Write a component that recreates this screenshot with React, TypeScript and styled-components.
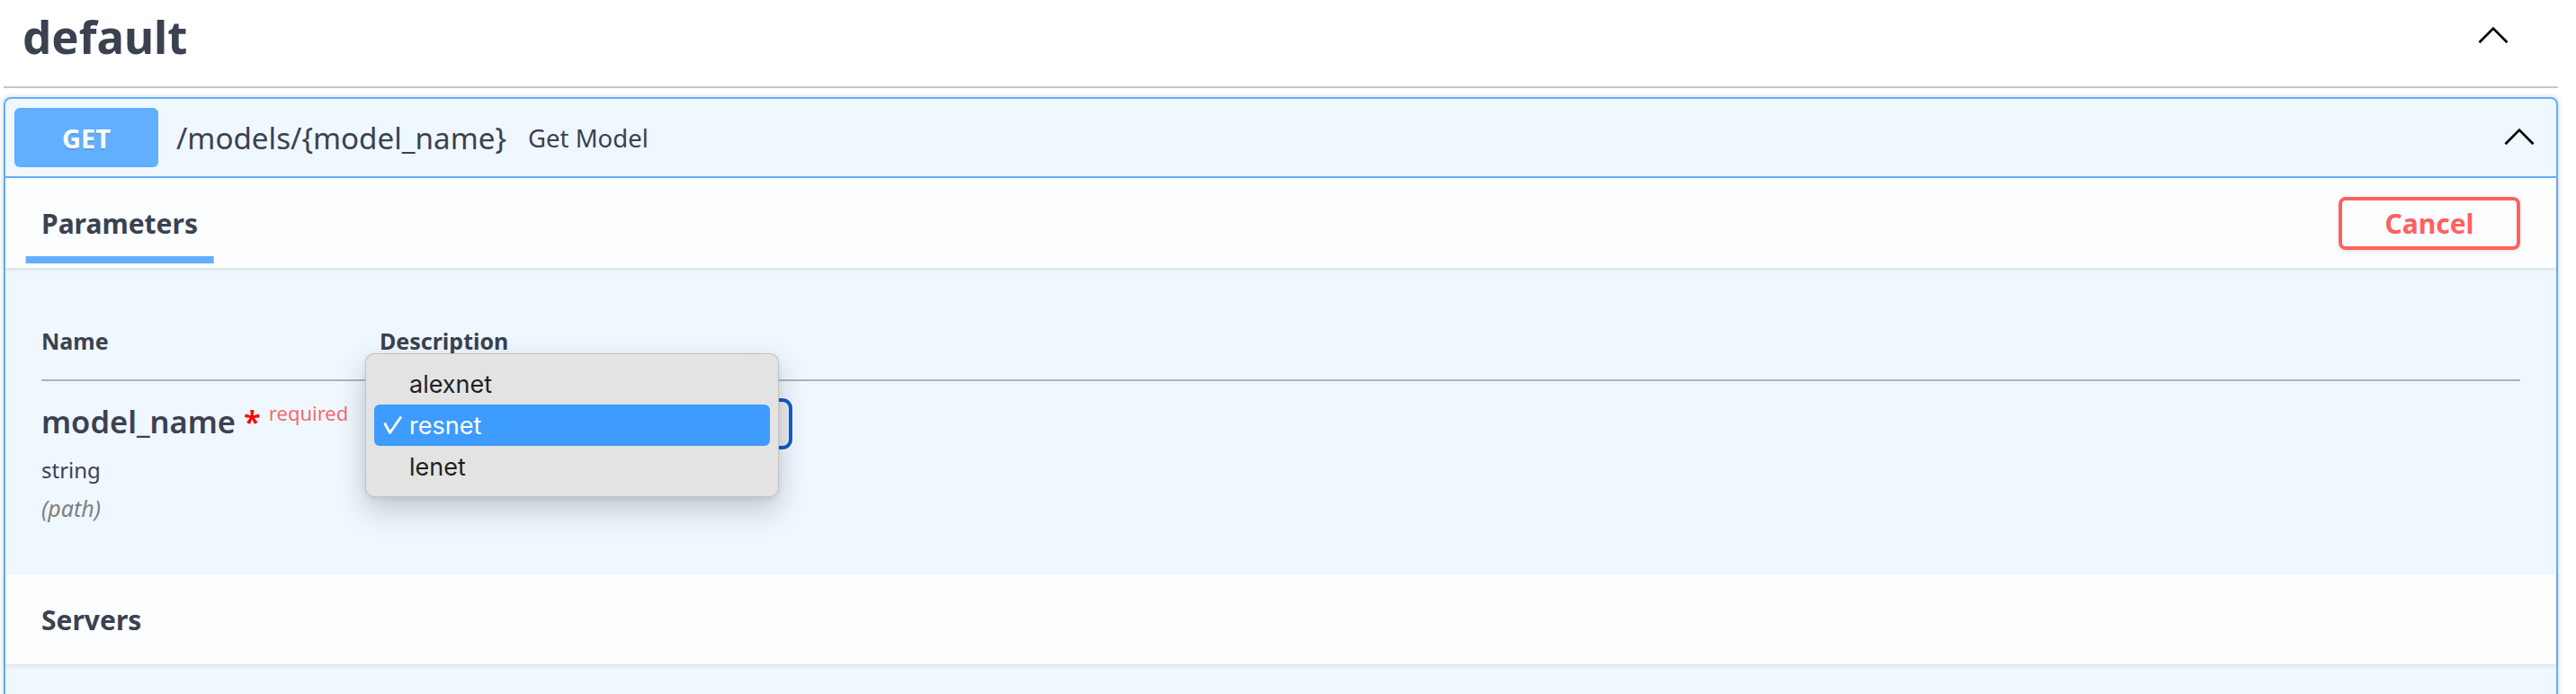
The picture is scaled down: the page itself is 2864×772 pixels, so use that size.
import React from "react";
import styled, { createGlobalStyle } from "styled-components";

const GlobalStyle = createGlobalStyle`
  html, body { margin: 0; padding: 0; background: #ffffff; }
  body {
    font-family: "Noto Sans", "Open Sans", sans-serif;
    color: #3b4151;
    -webkit-font-smoothing: antialiased;
  }
  * { box-sizing: border-box; }
`;

const Page = styled.div`
  padding: 0 20px 0 4px;
`;

const TagHeader = styled.div`
  display: flex;
  align-items: center;
  justify-content: space-between;
  height: 98px;
  padding: 12px 55px 28px 21px;
  border-bottom: 2px solid #c5c6cb;
  margin-bottom: 10px;
`;

const TagTitle = styled.h3`
  margin: 0;
  font-size: 51px;
  font-weight: 700;
  line-height: 56px;
  color: #3b4151;
`;

const ChevronSvg = styled.svg<{ $lift?: number }>`
  display: block;
  flex: none;
  margin-bottom: ${(p) => (p.$lift ?? 0) * 2}px;
`;

const Chevron = ({ lift }: { lift?: number }) => (
  <ChevronSvg $lift={lift} width="34" height="20" viewBox="0 0 34 20">
    <polyline
      points="1.5,18.3 17,2.6 32.5,18.3"
      fill="none"
      stroke="#000"
      strokeWidth="2.7"
    />
  </ChevronSvg>
);

const Opblock = styled.div`
  border: 2px solid #61affe;
  border-radius: 8px;
  background: #eff7ff;
  box-shadow: 0 0 6px rgba(0, 0, 0, 0.19);
`;

const Summary = styled.div`
  display: flex;
  align-items: center;
  padding: 10px 24px 10px 10px;
  border-bottom: 2px solid #61affe;
`;

const Method = styled.span`
  display: inline-flex;
  align-items: center;
  justify-content: center;
  min-width: 160px;
  height: 66px;
  border-radius: 6px;
  background: #61affe;
  color: #ffffff;
  font-size: 29px;
  font-weight: 700;
  text-shadow: 0 2px 0 rgba(0, 0, 0, 0.1);
`;

const PathText = styled.span`
  padding: 0 20px;
  font-size: 33.2px;
  color: #3b4151;
  white-space: nowrap;
`;

const SummaryDesc = styled.span`
  flex: 1;
  margin-left: 4px;
  font-size: 27.5px;
  color: #3b4151;
`;

const SectionHeader = styled.div`
  position: relative;
  display: flex;
  align-items: center;
  justify-content: space-between;
  height: 100px;
  padding: 0 40px;
  background: rgba(255, 255, 255, 0.8);
  box-shadow: 0 2px 4px rgba(0, 0, 0, 0.1);
`;

const SectionTitle = styled.h4<{ $active?: boolean }>`
  position: relative;
  margin: 0;
  font-size: 30px;
  font-weight: 700;
  line-height: 41px;
  color: #3b4151;
  &::after {
    content: "";
    display: ${(p) => (p.$active ? "block" : "none")};
    position: absolute;
    left: 50%;
    transform: translateX(-50%);
    width: 120%;
    height: 8px;
    top: calc(100% + 16px);
    background: #61affe;
  }
`;

const CancelButton = styled.button`
  width: 202px;
  height: 59px;
  padding: 0;
  border: 4px solid #ff6060;
  border-radius: 8px;
  background: transparent;
  color: #ff6060;
  font-family: inherit;
  font-size: 30px;
  font-weight: 700;
  box-shadow: 0 2px 4px rgba(0, 0, 0, 0.1);
`;

const ParamsBody = styled.div`
  padding: 40px;
`;

const HeadRow = styled.div`
  display: grid;
  grid-template-columns: 376px 1fr;
  border-bottom: 2px solid #aeb3bd;
`;

const HeadCell = styled.div`
  padding: 23px 0 25px;
  font-size: 25px;
  font-weight: 700;
  line-height: 36px;
  color: #3b4151;
`;

const ParamRow = styled.div`
  display: grid;
  grid-template-columns: 376px 1fr;
  height: 175px;
`;

const NameCell = styled.div`
  padding-top: 22px;
`;

const NameLine = styled.div`
  font-size: 34.5px;
  font-weight: 600;
  line-height: 46px;
  white-space: nowrap;
  color: #3b4151;
`;

const Star = styled.span`
  color: #ff0000;
`;

const Required = styled.span`
  position: relative;
  top: -14px;
  padding-left: 9px;
  font-size: 22px;
  font-weight: 400;
  color: rgba(255, 0, 0, 0.6);
`;

const TypeLine = styled.div`
  margin-top: 11px;
  font-size: 24px;
  line-height: 32px;
  color: #3b4151;
`;

const InLine = styled.div`
  margin-top: 10px;
  font-size: 25px;
  line-height: 32px;
  font-style: italic;
  color: #808080;
`;

const DescCell = styled.div`
  padding-top: 19px;
`;

const SelectBox = styled.div`
  position: relative;
  width: 459px;
  height: 57px;
  border: 4px solid #0b5fd1;
  border-radius: 11px;
  background: #ececef;
  box-shadow: 0 0 0 1.5px #ffffff;
`;

const Menu = styled.div`
  position: absolute;
  left: -20px;
  top: -54px;
  z-index: 10;
  width: 460px;
  height: 160px;
  padding: 10px 9px;
  border: 1px solid rgba(0, 0, 0, 0.14);
  border-radius: 10px;
  background: #e3e3e3;
  box-shadow: 0 14px 34px rgba(0, 0, 0, 0.2), 0 2px 6px rgba(0, 0, 0, 0.08);
`;

const MenuItem = styled.div<{ $selected?: boolean }>`
  position: relative;
  display: flex;
  align-items: center;
  height: 46px;
  padding-left: 39px;
  border-radius: 6px;
  font-family: Inter, "Liberation Sans", sans-serif;
  font-size: 27px;
  color: ${(p) => (p.$selected ? "#ffffff" : "#1f1f1f")};
  background: ${(p) => (p.$selected ? "#3e9bff" : "transparent")};
`;

const CheckSvg = styled.svg`
  position: absolute;
  left: 10px;
  top: 12px;
`;

const Check = () => (
  <CheckSvg width="22" height="22" viewBox="0 0 22 22">
    <polyline
      points="1.5,8.5 7.5,19.5 20,1.5"
      fill="none"
      stroke="#ffffff"
      strokeWidth="2.8"
      strokeLinejoin="round"
    />
  </CheckSvg>
);

const ServersBody = styled.div`
  height: 200px;
`;

const options = ["alexnet", "resnet", "lenet"];

export default function App() {
  return (
    <>
      <GlobalStyle />
      <Page>
        <TagHeader>
          <TagTitle>default</TagTitle>
          <Chevron lift={1} />
        </TagHeader>
        <Opblock>
          <Summary>
            <Method>GET</Method>
            <PathText>/models/{"{model_name}"}</PathText>
            <SummaryDesc>Get Model</SummaryDesc>
            <Chevron lift={1} />
          </Summary>
          <SectionHeader>
            <SectionTitle $active>Parameters</SectionTitle>
            <CancelButton>Cancel</CancelButton>
          </SectionHeader>
          <ParamsBody>
            <HeadRow>
              <HeadCell>Name</HeadCell>
              <HeadCell>Description</HeadCell>
            </HeadRow>
            <ParamRow>
              <NameCell>
                <NameLine>
                  model_name<Star>{"\u00a0*"}</Star>
                  <Required>required</Required>
                </NameLine>
                <TypeLine>string</TypeLine>
                <InLine>(path)</InLine>
              </NameCell>
              <DescCell>
                <SelectBox>
                  <Menu>
                    {options.map((o) => (
                      <MenuItem key={o} $selected={o === "resnet"}>
                        {o === "resnet" && <Check />}
                        {o}
                      </MenuItem>
                    ))}
                  </Menu>
                </SelectBox>
              </DescCell>
            </ParamRow>
          </ParamsBody>
          <SectionHeader>
            <SectionTitle>Servers</SectionTitle>
          </SectionHeader>
          <ServersBody />
        </Opblock>
      </Page>
    </>
  );
}
